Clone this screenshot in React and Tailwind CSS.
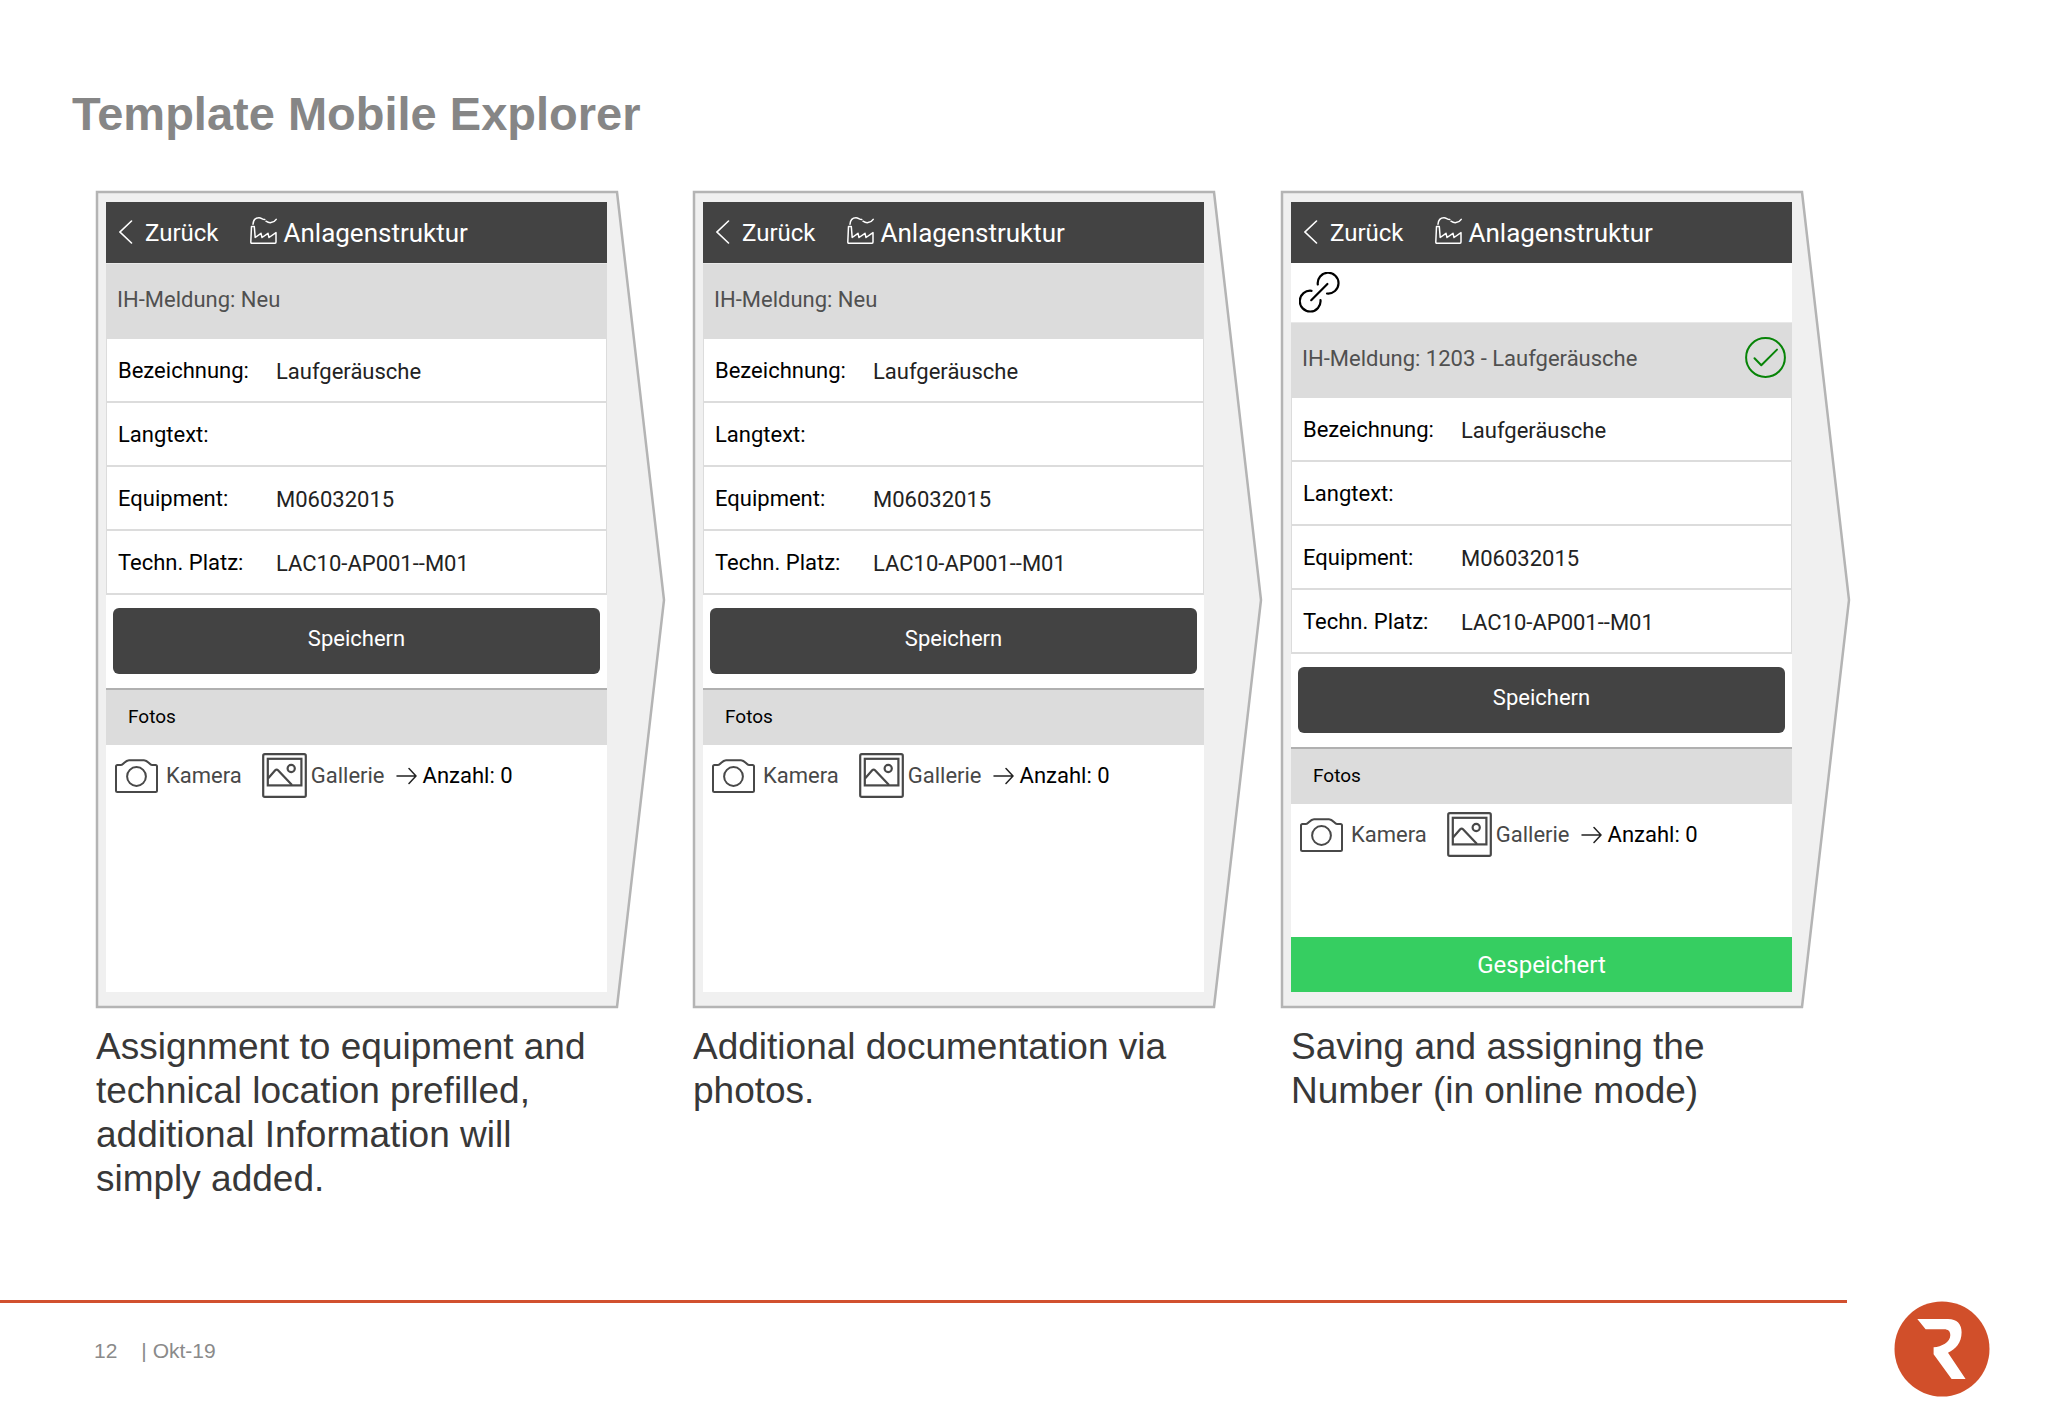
import React, { useId } from "react";

const Factory = () => (
  <svg viewBox="0 0 27 27" className="mb-1 h-[27px] w-[27px] shrink-0" fill="none" stroke="currentColor" strokeWidth="1.5" strokeLinejoin="round" strokeLinecap="round" aria-hidden="true">
    <path d="M1.5 9.5 H4.3 L5.2 20.5 L11 16.3 L12 20.5 L18 16.3 L19 20.5 L26 15.6 V25 Q26 26.2 25 26.2 H1.8 Q.8 26.2 .8 25 Z" />
    <path d="M3 7.2 C3.3 3.5 5.5 .8 9 .8 C11.5 .8 12 2.6 14.8 2.6" />
    <path d="M16 4.2 C17.5 5.2 19 5.9 21 5.6 C23.3 5.3 25 4.3 26.2 2.4" />
  </svg>
);

const Chevron = () => (
  <svg viewBox="0 0 14 24" className="mb-0.5 h-6 w-3.5 shrink-0" fill="none" stroke="currentColor" strokeWidth="1.6" strokeLinecap="round" aria-hidden="true">
    <path d="M12.5 1 L1 12 L12.5 23" />
  </svg>
);

const Camera = () => (
  <svg viewBox="0 0 43 34" className="h-[34px] w-[43px] shrink-0" fill="none" stroke="currentColor" strokeWidth="2" strokeLinejoin="round" aria-hidden="true">
    <path d="M2.5 6 H6 C8.5 6 10 1.2 14 1.2 H29 C33 1.2 34.5 6 37 6 H40.5 Q42 6 42 7.5 V31.5 Q42 33 40.5 33 H2.5 Q1 33 1 31.5 V7.5 Q1 6 2.5 6 Z" />
    <circle cx="21.5" cy="17.5" r="9.4" />
  </svg>
);

const Gallery = () => (
  <svg viewBox="0 0 45 45" className="h-[45px] w-[45px] shrink-0" fill="none" stroke="currentColor" strokeWidth="2.2" strokeLinejoin="round" aria-hidden="true">
    <rect x="1.2" y="1.2" width="42.6" height="42.6" rx="1.6" />
    <rect x="5.8" y="5.8" width="33.6" height="26.6" strokeLinejoin="miter" />
    <path d="M6 25.5 L13.2 17.3 Q14.6 15.8 16 17.3 L30 32" />
    <circle cx="29.2" cy="15.5" r="3.6" />
  </svg>
);

const Arrow = () => (
  <svg viewBox="0 0 21 18" className="h-[18px] w-[21px] shrink-0" fill="none" stroke="#222" strokeWidth="1.5" strokeLinecap="round" aria-hidden="true">
    <path d="M1 9 H20 M13 1.5 L20 9 L13 16.5" />
  </svg>
);

const Link = () => (
  <svg viewBox="0 0 41 41" className="h-[41px] w-[41px]" fill="none" stroke="#000" strokeWidth="2.2" strokeLinecap="round" aria-hidden="true">
    <path d="M18.8 12.5 A10.4 10.4 0 1 1 28 21.5" />
    <path d="M12.5 18.8 A10.4 10.4 0 1 0 21.5 28" />
    <path d="M12.2 28.2 L28.4 12" />
  </svg>
);

const Check = () => (
  <svg viewBox="0 0 41 41" className="mt-[14px] h-[41px] w-[41px] self-start" fill="none" stroke="#078407" strokeWidth="2" strokeLinecap="round" strokeLinejoin="round" role="img" aria-label="OK">
    <circle cx="20.5" cy="20.5" r="19.4" />
    <path d="M9.5 21.2 L16.3 28.2 L32 12.6" />
  </svg>
);

function Field({ label, value }) {
  const id = useId();
  return (
    <div className="flex h-16 items-center border-b-2 border-[#dcdcdc] pt-0.5 pl-[11px]">
      <label htmlFor={id} className="w-[158px] shrink-0">{label}</label>
      <input id={id} type="text" defaultValue={value} className="min-w-0 flex-1 bg-transparent pt-0.5 text-[#222] outline-none" />
    </div>
  );
}

function Screen({ saved, title }) {
  return (
    <div className="relative flex h-[790px] flex-col bg-white font-[Roboto,sans-serif] text-[22px] leading-7 text-black">
      <header className="flex h-[61px] shrink-0 items-center bg-[#434343] pl-[13px] text-white">
        <button type="button" className="flex items-center gap-3 text-[24px]">
          <Chevron />
          Zurück
        </button>
        <h2 className="ml-8 flex items-center gap-1.5 text-[26px]">
          <Factory />
          Anlagenstruktur
        </h2>
      </header>
      {saved && (
        <div className="flex h-[59px] shrink-0 items-center pl-2">
          <button type="button" aria-label="Link"><Link /></button>
        </div>
      )}
      <div className="flex h-[76px] shrink-0 items-center justify-between border-t border-[#e8e8e8] bg-[#dcdcdc] pr-1.5 pb-1 pl-[11px] text-[#505050]">
        <h3>{title}</h3>
        {saved && <Check />}
      </div>
      <form className="contents" onSubmit={(e) => e.preventDefault()}>
        <div className="shrink-0 border-x border-[#dcdcdc]">
          <Field label="Bezeichnung:" value="Laufgeräusche" />
          <Field label="Langtext:" value="" />
          <Field label="Equipment:" value="M06032015" />
          <Field label="Techn. Platz:" value="LAC10-AP001--M01" />
        </div>
        <button type="submit" className="mx-[7px] mt-[13px] h-[66px] shrink-0 rounded-md bg-[#434343] pb-1 text-white">
          Speichern
        </button>
      </form>
      <h3 className="mt-3.5 h-[57px] shrink-0 border-t-2 border-[#b0b0b0] bg-[#dcdcdc] pt-[13px] pl-[22px] text-[19px]">Fotos</h3>
      <div className="flex items-center pt-2 pl-[9px] text-[#484848]">
        <button type="button" className="flex items-center gap-2"><Camera />Kamera</button>
        <button type="button" className="ml-5 flex items-center gap-1"><Gallery />Gallerie</button>
        <span className="ml-[11px] flex items-center gap-1.5 text-black"><Arrow />Anzahl: 0</span>
      </div>
      {saved && (
        <p role="status" className="mt-auto flex h-[55px] items-center justify-center bg-[#36ce61] text-[24px] text-white">Gespeichert</p>
      )}
    </div>
  );
}

function Step({ saved, title, caption }) {
  return (
    <section className="max-w-[569px] min-w-0">
      <div className="relative pt-[11px] pr-[58px] pb-4 pl-2.5">
        <svg className="absolute inset-0 h-full w-full overflow-visible" viewBox="0 0 569 817" preserveAspectRatio="none" aria-hidden="true">
          <path d="M1 1 H521 L568 409 L521 816 H1 Z" fill="#f0f0f0" stroke="#b4b4b4" strokeWidth="2.5" vectorEffect="non-scaling-stroke" />
        </svg>
        <Screen saved={saved} title={title} />
      </div>
      <p className={saved ? "max-w-[510px] pt-[17px] pl-2.5" : "max-w-[510px] pt-[17px]"}>{caption}</p>
    </section>
  );
}

export default function App() {
  return (
    <div className="flex min-h-screen flex-col bg-white font-['Liberation_Sans',Arial,sans-serif]">
      <h1 className="pt-[84px] pl-[72px] text-[47px] leading-[60px] font-bold text-[#868686]">Template Mobile Explorer</h1>
      <main className="mt-[47px] grid flex-1 grid-cols-[597fr_588fr_767fr] pl-24 text-[37px] leading-[44px] text-[#383838]">
        <Step title="IH-Meldung: Neu" caption="Assignment to equipment and technical location prefilled, additional Information will simply added." />
        <Step title="IH-Meldung: Neu" caption="Additional documentation via photos." />
        <Step saved title="IH-Meldung: 1203 - Laufgeräusche" caption="Saving and assigning the Number (in online mode)" />
      </main>
      <footer className="flex h-[118px] justify-between pr-[58px]">
        <div className="mr-[47px] flex-1 border-t-[3px] border-[#d1502f] pt-[34px] pl-[94px] text-[21px] leading-7 text-[#8a8a8a]">
          <span>12</span>
          <span className="ml-6">| Okt-19</span>
        </div>
        <svg viewBox="0 0 96 96" className="mt-px h-24 w-24" role="img" aria-label="R">
          <circle cx="48" cy="48" r="47.5" fill="#d14f2a" />
          <path d="M23.3 18 H54 C63 18 67.6 23 67.6 31.3 C67.6 42 61.5 48.3 54 51.8 L71.6 78 H57.6 L39.6 53.3 V46.3 C47.5 45.8 56.3 41.3 56.3 34.3 C56.3 30.3 54.3 28.3 50 28.3 H31.6 Z" fill="#fff" />
        </svg>
      </footer>
    </div>
  );
}
